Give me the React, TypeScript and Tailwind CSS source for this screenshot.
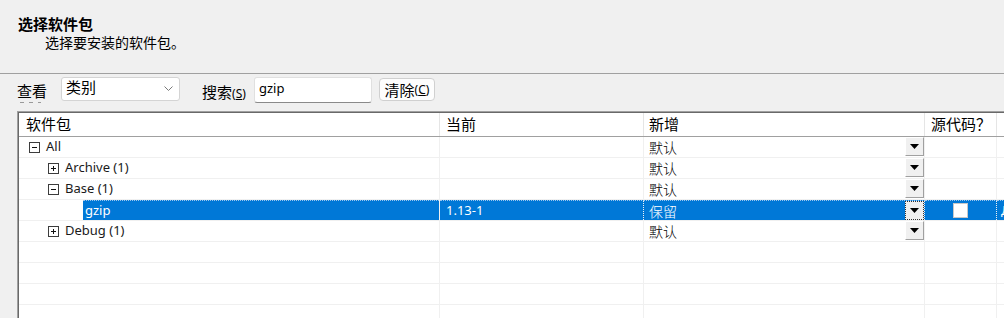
import React from "react"

type Row = {
  level: number
  toggle?: "plus" | "minus"
  label?: string
  cur?: string
  add?: string
  selected?: boolean
  src?: boolean
}

const ROWS: Row[] = [
  { level: 0, toggle: "minus", label: "All", add: "默认" },
  { level: 1, toggle: "plus", label: "Archive (1)", add: "默认" },
  { level: 1, toggle: "minus", label: "Base (1)", add: "默认" },
  { level: 2, label: "gzip", cur: "1.13-1", add: "保留", selected: true, src: true },
  { level: 1, toggle: "plus", label: "Debug (1)", add: "默认" },
  { level: 0 },
  { level: 0 },
  { level: 0 },
  { level: 0 },
]

function ToggleBox({ kind }: { kind: "plus" | "minus" }) {
  return (
    <svg width="11" height="11" viewBox="0 0 11 11" className="shrink-0">
      <rect x="0.5" y="0.5" width="10" height="10" fill="white" stroke="#3c3c3c" />
      <line x1="3" y1="5.5" x2="8" y2="5.5" stroke="#111" />
      {kind === "plus" ? <line x1="5.5" y1="3" x2="5.5" y2="8" stroke="#111" /> : null}
    </svg>
  )
}

function DropButton({ focused }: { focused?: boolean }) {
  return (
    <div
      className={
        "flex h-[19px] w-[19px] shrink-0 items-center justify-center bg-[#f0f0f0] " +
        (focused
          ? "border border-dotted border-[#333]"
          : "border border-t-white border-l-white border-r-[#a0a0a0] border-b-[#a0a0a0]")
      }
    >
      <svg width="9" height="5" viewBox="0 0 9 5">
        <path d="M0 0 H9 L4.5 5 Z" fill="#000" />
      </svg>
    </div>
  )
}

function TableRow({ row }: { row: Row }) {
  const sel = !!row.selected
  const cellLine = "border-r border-[#f0f0f0]"
  const empty = row.label === undefined
  return (
    <div className="flex h-[21px] border-b border-[#f0f0f0] text-[13px]">
      {/* 软件包 */}
      <div className={"flex w-[421px] shrink-0 items-center " + cellLine}>
        {empty ? null : row.toggle ? (
          <>
            <div style={{ width: 10 + row.level * 19 }} className="shrink-0" />
            <ToggleBox kind={row.toggle} />
            <span className="ml-[6px] text-[#1a1a1a]">{row.label}</span>
          </>
        ) : (
          <>
            <div className="w-[64px] shrink-0" />
            <div
              className={
                "flex h-[20px] flex-1 items-center pl-[2px] " +
                (sel ? "border-t border-dotted border-t-[#9cc6ee] bg-[#0078d7] text-white" : "")
              }
            >
              {row.label}
            </div>
          </>
        )}
      </div>
      {/* 当前 */}
      <div
        className={
          "flex w-[204px] shrink-0 items-center pl-[6px] " +
          cellLine +
          (sel ? " border-t border-dotted border-t-[#9cc6ee] bg-[#0078d7] text-white" : "")
        }
      >
        {row.cur}
      </div>
      {/* 新增 */}
      <div
        className={
          "flex w-[281px] shrink-0 items-start " +
          cellLine +
          (sel ? " border-t border-dotted border-t-[#9cc6ee] bg-[#0078d7] text-white" : "")
        }
      >
        {row.add ? (
          <>
            <span className="flex h-[20px] flex-1 items-center pl-[5px] font-['Noto_Sans_CJK_SC',sans-serif] text-[14px] font-light">
              {row.add}
            </span>
            <DropButton focused={sel} />
          </>
        ) : null}
      </div>
      {/* 源代码? */}
      <div
        className={
          "flex w-[72px] shrink-0 items-center justify-center " +
          cellLine +
          (sel ? " border-t border-dotted border-t-[#9cc6ee] bg-[#0078d7]" : "")
        }
      >
        {row.src ? <div className="h-[15px] w-[15px] border border-[#c8c8c8] bg-white" /> : null}
      </div>
      <div
        className={
          "flex flex-1 items-center overflow-hidden pl-[4px] " +
          (sel ? "border-t border-dotted border-t-[#9cc6ee] bg-[#0078d7] text-white" : "")
        }
      >
        {sel ? "Д" : null}
      </div>
    </div>
  )
}

export default function App() {
  return (
    <div className="h-[318px] w-[1004px] overflow-hidden bg-[#f0f0f0] font-['Noto_Sans','Noto_Sans_CJK_SC',sans-serif] text-black">
      {/* 标题 */}
      <div className="pl-[18px] pt-[14px] font-['Noto_Sans_CJK_SC',sans-serif] text-[15px] font-bold leading-[19px]">
        选择软件包
      </div>
      <div className="pl-[45px] font-['Noto_Sans_CJK_SC',sans-serif] text-[14px] leading-[19px]">
        选择要安装的软件包。
      </div>
      <div className="mt-[21px] h-px bg-[#a0a0a0]" />

      {/* 工具栏 */}
      <div className="mt-[3px] flex h-[26px] items-start">
        <div className="relative ml-[17px] mt-[5px] w-[42px] font-['Noto_Sans_CJK_SC',sans-serif] text-[15px] leading-[18px]">
          查看
          {/* 被截断的下一行标签残影 */}
          <div className="absolute left-[3px] top-[20px] flex gap-[5px]">
            <div className="h-px w-[4px] bg-[#9a9a9a]" />
            <div className="h-px w-[4px] bg-[#9a9a9a]" />
            <div className="h-px w-[3px] bg-[#9a9a9a]" />
          </div>
        </div>
        <div className="ml-[2px] flex h-[24px] w-[119px] items-center justify-between rounded-[3px] border border-[#d4d4d4] bg-white pl-[4px] pr-[6px] font-['Noto_Sans_CJK_SC',sans-serif] text-[15px]">
          <span className="-mt-[3px]">类别</span>
          <svg width="9" height="6" viewBox="0 0 9 6">
            <path d="M0.5 0.5 L4.5 4.5 L8.5 0.5" fill="none" stroke="#7a7a7a" />
          </svg>
        </div>
        <div className="ml-[22px] mt-[6px] w-[52px] font-['Noto_Sans_CJK_SC',sans-serif] text-[15px] leading-[18px]">
          搜索
          <span className="font-['Noto_Sans',sans-serif] text-[12px]">
            (<span className="underline">S</span>)
          </span>
        </div>
        <div className="h-[26px] w-[118px] rounded-[3px] border border-[#e0e0e0] border-b-[#8a8a8a] bg-white pl-[4px] pt-[2px] text-[13px] leading-[16px]">
          gzip
        </div>
        <button className="ml-[7px] mt-[1px] flex h-[23px] w-[56px] items-center justify-center rounded-[4px] border border-[#d0d0d0] bg-[#fdfdfd] font-['Noto_Sans_CJK_SC',sans-serif] text-[15px] leading-[18px]">
          清除
          <span className="font-['Noto_Sans',sans-serif] text-[12px]">
            (<span className="underline">C</span>)
          </span>
        </button>
      </div>

      {/* 软件包表 */}
      <div className="ml-[17px] mt-[8px] w-[1010px] border border-[#a0a0a0] border-r-transparent border-b-transparent">
        <div className="border border-[#696969] border-r-transparent border-b-transparent bg-white">
          <div className="flex h-[24px] border-b border-[#a0a0a0] font-['Noto_Sans_CJK_SC',sans-serif] text-[15px]">
            <div className="flex w-[421px] shrink-0 items-center border-r border-[#e5e5e5] pl-[7px]">软件包</div>
            <div className="flex w-[204px] shrink-0 items-center border-r border-[#e5e5e5] pl-[6px]">当前</div>
            <div className="flex w-[281px] shrink-0 items-center border-r border-[#e5e5e5] pl-[5px]">新增</div>
            <div className="flex w-[72px] shrink-0 items-center border-r border-[#e5e5e5] pl-[6px]">源代码？</div>
            <div className="flex-1" />
          </div>
          {ROWS.map((row, i) => (
            <TableRow key={i} row={row} />
          ))}
        </div>
      </div>
    </div>
  )
}
